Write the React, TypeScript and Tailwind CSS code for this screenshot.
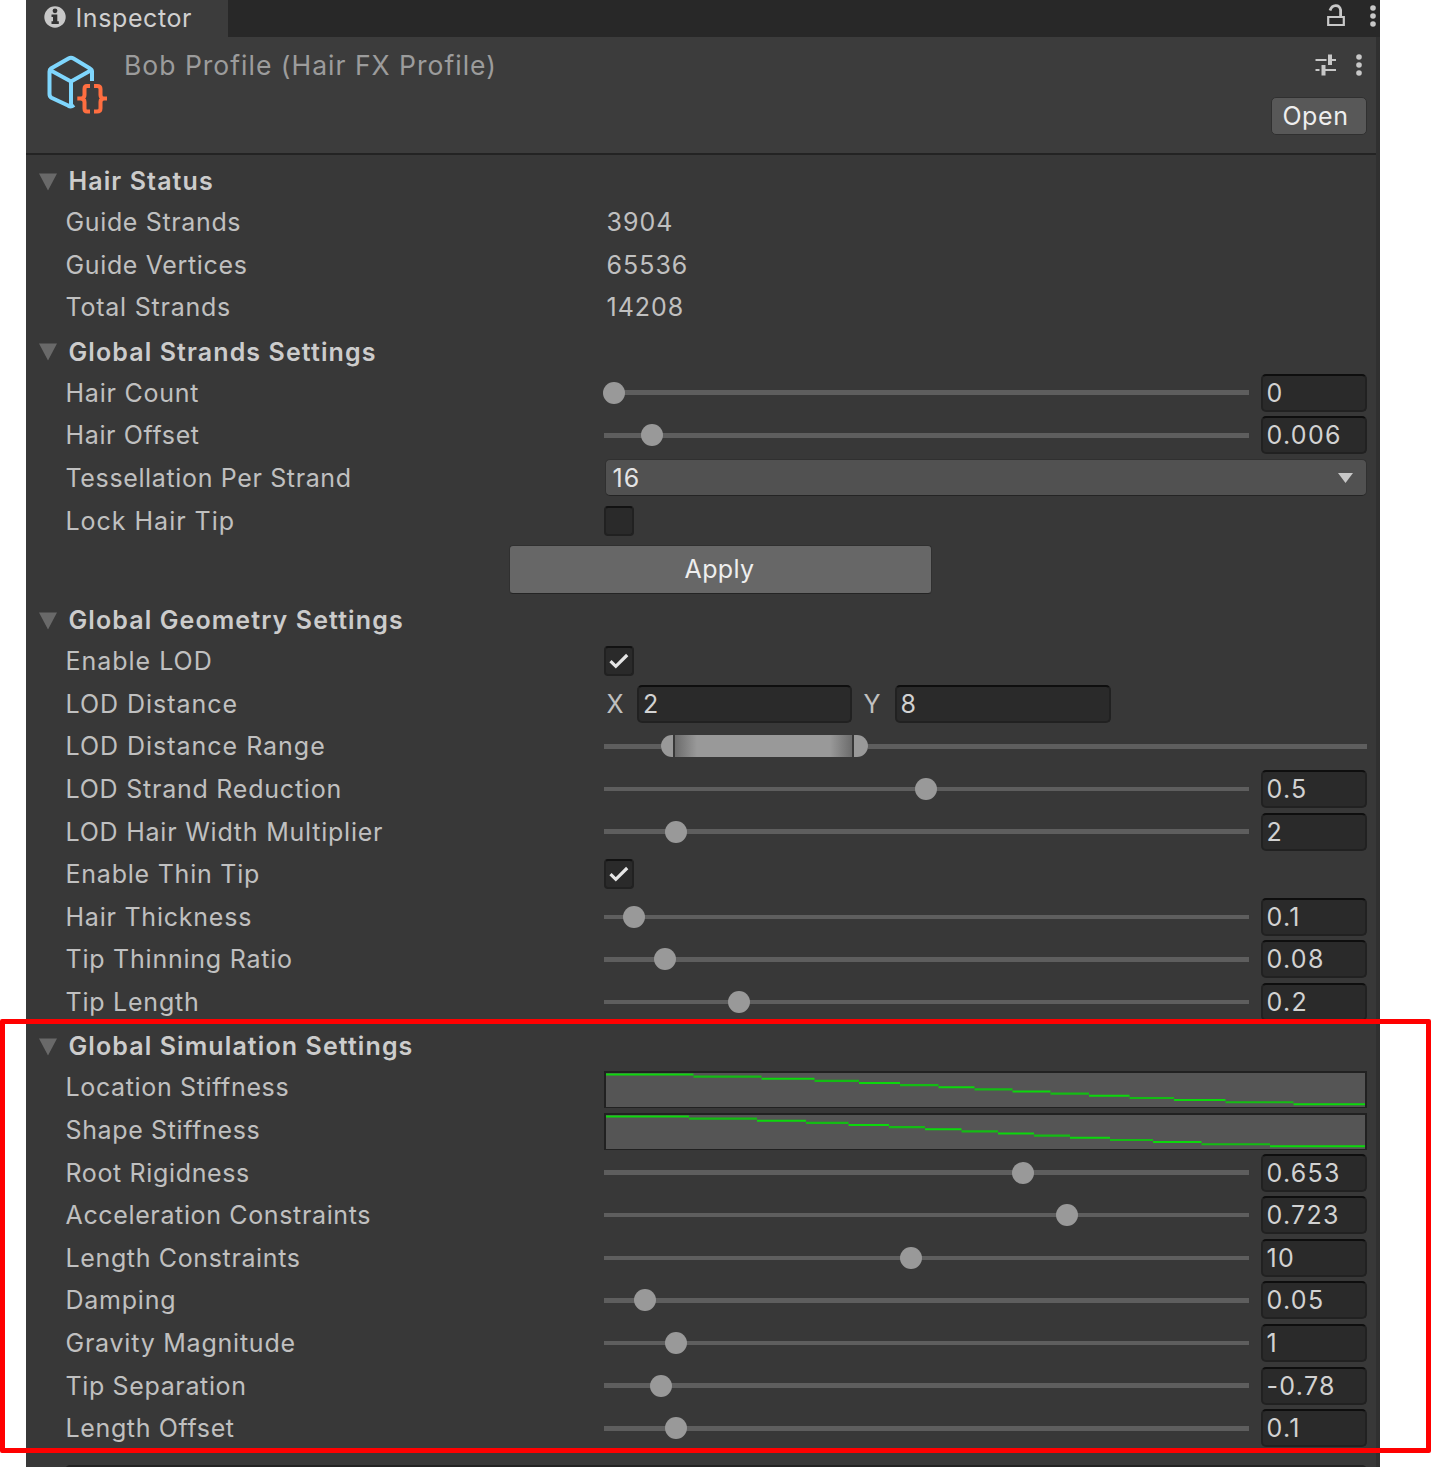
import React, { useState } from "react";

const fieldStyle =
  "h-[38px] rounded-[5px] border-2 border-[#212121] border-t-[#0e0e0e] bg-[#2a2a2a] text-[#d2d2d2] outline-none tracking-[1.3px]";

const TIGHT = "tracking-[0.64px]";
const NORMAL = "tracking-[0.77px]";
const WIDE = "tracking-[0.98px]";

type RowProps = {
  label: string;
  tracking?: string;
};

const Row = ({ label, tracking = NORMAL, children }: RowProps & { children: React.ReactNode }) => (
  <div className="flex h-[42.63px] items-center pl-[39.5px]">
    <span className={`w-[538px] shrink-0 whitespace-nowrap text-[#c0c0c0] ${tracking}`}>{label}</span>
    <div className="flex w-[763.5px] shrink-0 items-center">{children}</div>
  </div>
);

const StatRow = ({ label, value, tracking }: RowProps & { value: string }) => (
  <Row label={label} tracking={tracking}>
    <span className="ml-[3px] tracking-[1px] text-[#c0c0c0]">{value}</span>
  </Row>
);

const Section = ({ title, children }: { title: string; children: React.ReactNode }) => {
  const [open, setOpen] = useState<boolean>(true);

  return (
    <section>
      <button
        type="button"
        onClick={() => setOpen(prev => !prev)}
        className="flex h-[42.63px] w-full items-center gap-[11.5px] pl-[13px] pt-[3.5px] text-left"
      >
        <svg
          width="18"
          height="18"
          viewBox="0 0 18 18"
          className={open ? "mt-px shrink-0" : "mt-px shrink-0 -rotate-90"}
        >
          <path d="M0 0.5H18L9 17.5Z" fill="#696969" />
        </svg>
        <span className="whitespace-nowrap font-semibold tracking-[1.1px] text-[#cccccc]">{title}</span>
      </button>
      {open && children}
    </section>
  );
};

// pos is the knob centre measured from the left end of the track
const SliderRow = ({ label, value, pos, tracking }: RowProps & { value: string; pos: number }) => {
  const [text, setText] = useState<string>(value);

  return (
    <Row label={label} tracking={tracking}>
      <div className="relative flex h-[22px] w-[645.5px] items-center">
        <div className="h-[4.5px] w-full bg-[#5e5e5e]" />
        <div
          className="absolute top-0 h-[22px] w-[22px] rounded-full bg-[#999999]"
          style={{ left: pos - 11.4 }}
        />
      </div>
      <input
        value={text}
        onChange={e => setText(e.target.value)}
        className={`ml-[12px] w-[106px] pl-[3.5px] ${fieldStyle}`}
      />
    </Row>
  );
};

const CheckRow = ({ label, tracking, initial = false }: RowProps & { initial?: boolean }) => {
  const [checked, setChecked] = useState<boolean>(initial);

  return (
    <Row label={label} tracking={tracking}>
      <button
        type="button"
        onClick={() => setChecked(prev => !prev)}
        className="flex h-[30px] w-[30px] items-center justify-center rounded-[4px] border-2 border-[#212121] border-t-[#121212] bg-[#2a2a2a]"
      >
        {checked && (
          <svg width="20" height="16" viewBox="0 0 20 16" fill="none">
            <path d="M1.5 8.2L6.8 13.3L18.2 2" stroke="#e6e6e6" strokeWidth="3.2" />
          </svg>
        )}
      </button>
    </Row>
  );
};

const CurveRow = ({ label, steps, tracking }: RowProps & { steps: number[] }) => (
  <Row label={label} tracking={tracking}>
    <div className="ml-[0.5px] mt-[4px] h-[37px] w-[763px] border-2 border-b-[1.5px] border-[#212121] bg-[#555555]">
      <svg width="759" height="33" viewBox="0 0 759 33" className="block">
        {steps.slice(0, -1).map((x, i) => (
          <path
            key={x}
            d={`M${x} ${1.5 + i * 2.13}H${steps[i + 1]}`}
            stroke={i % 2 === 0 ? "#0cd80c" : "#14bc14"}
            strokeWidth="2.1"
          />
        ))}
      </svg>
    </div>
  </Row>
);

const Kebab = () => (
  <svg width="6" height="22" viewBox="0 0 6 22" fill="#c8c8c8" className="block">
    <circle cx="3" cy="3" r="2.8" />
    <circle cx="3" cy="11" r="2.8" />
    <circle cx="3" cy="19" r="2.8" />
  </svg>
);

const locationSteps = [0, 87.5, 155.5, 208.5, 253, 294, 332.5, 368.5, 406.5, 444.5, 483, 523.5, 568, 619.5, 687.5, 759];
const shapeSteps = [0, 83, 151, 200, 242.5, 283, 319, 355.5, 392, 428, 464, 504, 547, 595.5, 664, 759];

const App = () => {
  return (
    <div className="relative h-[1467px] w-[1431px] overflow-hidden bg-white font-['Inter',sans-serif] text-[25px] leading-[32px]">
      <div className="ml-[26px] h-full w-[1354px] overflow-hidden bg-[#303030]">
        {/* Tab bar */}
        <div className="flex h-[37px] justify-between bg-[#282828]">
          <div className="flex w-[201.5px] items-center bg-[#3c3c3c] pb-[2px] pl-[17.5px] text-[#d0d0d0]">
            <svg width="22" height="22" viewBox="0 0 22 22" className="mb-px shrink-0">
              <circle cx="11" cy="11" r="10.7" fill="#c8c8c8" />
              <circle cx="11" cy="4.8" r="2.4" fill="#333333" />
              <path d="M7.5 8.5H13.3V15.3H14.8V18H7.5V15.3H9V11H7.5Z" fill="#333333" />
            </svg>
            <span className="ml-[10px] tracking-[0.6px]">Inspector</span>
          </div>
          <div className="flex pt-[4px]">
            <svg width="20" height="23" viewBox="0 0 20 23" fill="none" stroke="#c8c8c8" className="mr-[23.5px]">
              <path d="M2.2 13H17.8V21H2.2Z" strokeWidth="2.2" />
              <path d="M4 6.5C6 0 13.5 0 14.6 6V13" strokeWidth="2.8" />
            </svg>
            <div className="mr-[4.5px] mt-[0.5px]">
              <Kebab />
            </div>
          </div>
        </div>

        {/* Asset header */}
        <div className="flex h-[118px] w-[1350px] justify-between border-b-2 border-[#232323] bg-[#3c3c3c]">
          <div className="flex pl-[20px]">
            <svg width="62" height="62" viewBox="0 0 62 62" fill="none" className="mt-[17px]">
              <path
                d="M46 27V17.5Q46 15.5 44 14.5L27.5 4.5Q25 3 22.5 4.5L5 14.5Q3.5 15.5 3.5 17.5V40Q3.5 42.5 5.5 43.7L22 51.5Q25 53.5 28 51M4 16L25 27.5L45.5 16M25 27.5V52"
                stroke="#7fd6fd"
                strokeWidth="4"
              />
              <path
                d="M44 32H41Q38.5 32 38.5 35V41Q38.5 44.5 34.5 44.5H31.3H34.5Q38.5 44.5 38.5 48V54.5Q38.5 57.5 41 57.5H44M48 32H51Q54.5 32 54.5 35V41Q54.5 44.5 58 44.5H61H58Q54.5 44.5 54.5 48V54.5Q54.5 57.5 51 57.5H48"
                stroke="#ff6e40"
                strokeWidth="4"
              />
            </svg>
            <h1 className="ml-[16px] mt-[11.5px] whitespace-nowrap text-[26.5px] tracking-[1px] text-[#9c9c9c]">
              Bob Profile (Hair FX Profile)
            </h1>
          </div>
          <div className="flex flex-col items-end pr-[9.5px] pt-[17px]">
            <div className="flex pr-[5px]">
              <svg width="22" height="22" viewBox="0 0 22 22" className="mr-[19px]">
                <path d="M0.5 6H11.5M16 6H21M0.5 16H4.5M10 16H21" stroke="#c8c8c8" strokeWidth="1.9" />
                <path d="M15 0.5V11M8.5 11V21.5" stroke="#c8c8c8" strokeWidth="4" />
              </svg>
              <Kebab />
            </div>
            <button
              type="button"
              className="mt-[20.5px] h-[38px] w-[96px] rounded-[5px] border-[1.5px] border-[#303030] bg-[#585858] pr-[6px] tracking-[0.6px] text-[#eeeeee]"
            >
              Open
            </button>
          </div>
        </div>

        <div className="h-[1400px] w-[1350px] bg-[#383838] pt-[3.3px]">
          <Section title="Hair Status">
            <StatRow label="Guide Strands" value="3904" tracking={TIGHT} />
            <StatRow label="Guide Vertices" value="65536" tracking={TIGHT} />
            <StatRow label="Total Strands" value="14208" />
          </Section>

          <Section title="Global Strands Settings">
            <SliderRow label="Hair Count" value="0" pos={11} />
            <SliderRow label="Hair Offset" value="0.006" pos={49} tracking={TIGHT} />
            <Row label="Tessellation Per Strand" tracking={TIGHT}>
              <button
                type="button"
                className="ml-px flex h-[37px] w-[762px] items-center justify-between rounded-[5px] border border-[#303030] border-b-[#242424] bg-[#515151] pl-[7px] pr-[13px] tracking-[1.15px] text-[#e4e4e4]"
              >
                16
                <svg width="15" height="10" viewBox="0 0 15 10">
                  <path d="M0 0H15L7.5 10Z" fill="#c8c8c8" />
                </svg>
              </button>
            </Row>
            <CheckRow label="Lock Hair Tip" tracking={WIDE} />
            <div className="flex h-[55.2px] pl-[483px] pt-[3px]">
              <button
                type="button"
                className="h-[49px] w-[423px] rounded-[4px] border border-[#303030] border-b-[#242424] bg-[#676767] pb-px pr-[2px] tracking-[0.35px] text-[#eeeeee]"
              >
                Apply
              </button>
            </div>
          </Section>

          <Section title="Global Geometry Settings">
            <CheckRow label="Enable LOD" tracking={WIDE} initial />
            <Row label="LOD Distance" tracking={WIDE}>
              <span className="w-[33px] pl-[3px] text-[#c0c0c0]">X</span>
              <input defaultValue="2" className={`w-[215.5px] pl-[4.5px] ${fieldStyle}`} />
              <span className="w-[42.5px] pl-[11.5px] text-[#c0c0c0]">Y</span>
              <input defaultValue="8" className={`w-[216px] pl-[4px] ${fieldStyle}`} />
            </Row>
            <Row label="LOD Distance Range" tracking={WIDE}>
              <div className="h-[4.5px] w-[57px] bg-[#5e5e5e]" />
              <div className="flex h-[22px] w-[207px] gap-[2px]">
                <div className="w-[12.5px] rounded-l-full bg-[#999999]" />
                <div className="flex-1 bg-[linear-gradient(to_right,#6c6c6c,#999999_22px,#999999_calc(100%-22px),#6c6c6c)]" />
                <div className="w-[13.5px] rounded-r-full bg-[#999999]" />
              </div>
              <div className="h-[4.5px] flex-1 bg-[#5e5e5e]" />
            </Row>
            <SliderRow label="LOD Strand Reduction" value="0.5" pos={323} />
            <SliderRow label="LOD Hair Width Multiplier" value="2" pos={73} />
            <CheckRow label="Enable Thin Tip" initial />
            <SliderRow label="Hair Thickness" value="0.1" pos={30.5} />
            <SliderRow label="Tip Thinning Ratio" value="0.08" pos={62} />
            <SliderRow label="Tip Length" value="0.2" pos={135.5} />
          </Section>

          <Section title="Global Simulation Settings">
            <CurveRow label="Location Stiffness" steps={locationSteps} tracking={TIGHT} />
            <CurveRow label="Shape Stiffness" steps={shapeSteps} tracking={TIGHT} />
            <SliderRow label="Root Rigidness" value="0.653" pos={419.5} tracking={TIGHT} />
            <SliderRow label="Acceleration Constraints" value="0.723" pos={463.5} tracking={TIGHT} />
            <SliderRow label="Length Constraints" value="10" pos={307.5} tracking={TIGHT} />
            <SliderRow label="Damping" value="0.05" pos={42} />
            <SliderRow label="Gravity Magnitude" value="1" pos={73} />
            <SliderRow label="Tip Separation" value="-0.78" pos={57.5} tracking={TIGHT} />
            <SliderRow label="Length Offset" value="0.1" pos={73} tracking={TIGHT} />
          </Section>

          <div className="ml-[39px] mt-[15px] h-[40px] w-[1302px] rounded-[5px] bg-[#232323]" />
        </div>
      </div>

      {/* Highlight around the simulation settings */}
      <div className="pointer-events-none absolute left-0 top-[1019px] h-[434px] w-[1431px] rounded-[2px] border-[5px] border-[#ff0000]" />
    </div>
  );
};

export default App;
